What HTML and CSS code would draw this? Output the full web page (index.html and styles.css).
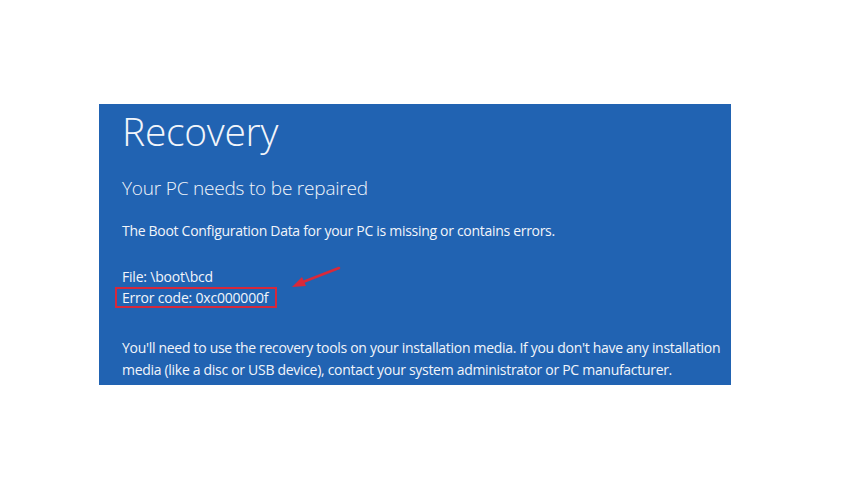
FILE: index.html
```html
<!DOCTYPE html>
<html lang="en">
<head>
  <meta charset="UTF-8" />
  <title>Recovery</title>
  <link rel="stylesheet" href="styles.css">
</head>
<body>
  <div class="screen">
    <h1>Recovery</h1>
    <h2>Your PC needs to be repaired</h2>
    <p class="msg">The Boot Configuration Data for your PC is missing or contains errors.</p>

    <div class="details">
      <div>File: \boot\bcd</div>
      <div class="error-code">Error code: 0xc000000f</div>
    </div>

    <p class="msg help">You'll need to use the recovery tools on your installation media. If you don't have any installation media (like a disc or USB device), contact your system administrator or PC manufacturer.</p>

    <!-- red annotation arrow -->
    <svg class="arrow" width="60" height="30" viewBox="0 0 60 30">
      <path d="M50 4 L14 18" stroke="#d8293a" stroke-width="2.5" stroke-linecap="round" fill="none"/>
      <path d="M3 23 L13 13 L17 22 Z" fill="#d8293a"/>
    </svg>
  </div>
</body>
</html>
```

FILE: styles.css
```css
body {
  margin: 0;
  background-color: #fff;
  font-family: "Open Sans", "Noto Sans", sans-serif;
}

.screen {
  position: relative;
  box-sizing: border-box;
  width: 632px;
  height: 281px;
  margin: 104px 0 0 99px;
  padding: 5px 0 0 23px;
  background-color: #2163b2;
  color: #f2f5fa;
  overflow: hidden;
}

h1 {
  margin: 0;
  font-size: 39px;
  font-weight: 300;
  line-height: 44px;
  letter-spacing: -0.3px;
}

h2 {
  margin: 22px 0 0;
  font-size: 19px;
  font-weight: 300;
  line-height: 26px;
  letter-spacing: -0.2px;
}

.msg {
  margin: 20px 0 0;
  font-size: 14px;
  line-height: 20px;
  letter-spacing: -0.3px;
}

.details {
  margin-top: 25px;
  font-size: 14px;
  line-height: 21px;
  letter-spacing: -0.2px;
}

.error-code {
  display: inline-block;
  margin-left: -7px;
  padding: 0 7px 0 5px;
  border: 2px solid #d6283b;
  line-height: 17px;
}

.help {
  margin-top: 29px;
  line-height: 22px;
}

.arrow {
  position: absolute;
  left: 190px;
  top: 160px;
}
```
